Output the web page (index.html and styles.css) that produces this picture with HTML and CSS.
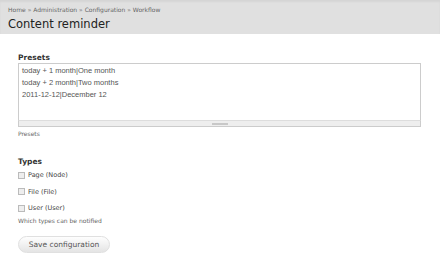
FILE: index.html
```html
<!DOCTYPE html>
<html lang="en">
<head>
    <meta charset="UTF-8">
    <title>Content reminder</title>
    <link rel="stylesheet" href="styles.css">
</head>
<body>
    <div class="branding">
        <div class="breadcrumb">
            <a href="#">Home</a> » <a href="#">Administration</a> » <a href="#">Configuration</a> » <a href="#">Workflow</a>
        </div>
        <h1 class="page-title">Content reminder</h1>
    </div>

    <div class="page">
        <form class="settings-form">
            <div class="form-item">
                <label for="presets">Presets</label>
                <div class="resizable">
                    <textarea id="presets" rows="5" spellcheck="false">today + 1 month|One month
today + 2 month|Two months
2011-12-12|December 12</textarea>
                    <div class="grippie"><span></span></div>
                </div>
                <div class="description">Presets</div>
            </div>

            <div class="form-item types">
                <label>Types</label>
                <div class="checkboxes">
                    <div class="checkbox"><input type="checkbox" id="t-page"><label for="t-page">Page (Node)</label></div>
                    <div class="checkbox"><input type="checkbox" id="t-file"><label for="t-file">File (File)</label></div>
                    <div class="checkbox"><input type="checkbox" id="t-user"><label for="t-user">User (User)</label></div>
                </div>
                <div class="description">Which types can be notified</div>
            </div>

            <div class="actions">
                <button type="submit" class="form-submit">Save configuration</button>
            </div>
        </form>
    </div>
</body>
</html>
```

FILE: styles.css
```css
* {
    margin: 0;
    padding: 0;
    box-sizing: border-box;
}

body {
    background: #fff;
    color: #333;
    font-family: 'DejaVu Sans', Verdana, sans-serif;
    font-size: 7px;
}

.branding {
    background: #e0e0e0;
    height: 34px;
    padding: 5px 8px 0;
    box-shadow: inset 0 2px 2px rgba(0,0,0,0.05);
}

.breadcrumb {
    font-size: 6px;
    color: #666;
    line-height: 9px;
}

.breadcrumb a {
    color: #666;
    text-decoration: none;
}

.page-title {
    font-size: 11.5px;
    font-weight: normal;
    color: #222;
    margin-top: 3px;
    line-height: 15px;
}

.page {
    padding: 19px 19px 0 18px;
}

.form-item > label {
    display: block;
    font-weight: bold;
    font-size: 7.5px;
    color: #333;
    line-height: 9px;
    margin-bottom: 1px;
}

.resizable {
    width: 403px;
}

.resizable textarea {
    display: block;
    width: 100%;
    height: 57px;
    border: 1px solid #ccc;
    border-bottom: none;
    padding: 1px 3px;
    font-family: 'Liberation Sans', Arial, sans-serif;
    font-size: 7.5px;
    line-height: 12px;
    color: #555;
    resize: none;
}

.grippie {
    height: 7px;
    background: #eee;
    border: 1px solid #ccc;
    border-top: 1px solid #ddd;
    display: flex;
    justify-content: center;
    align-items: center;
}

.grippie span {
    width: 16px;
    height: 2px;
    background: #c8c8c8;
}

.description {
    font-size: 6px;
    color: #666;
    line-height: 9px;
    margin-top: 2px;
}

.types {
    margin-top: 19px;
}

.checkboxes {
    margin-top: 1px;
}

.checkbox {
    display: flex;
    align-items: center;
    height: 16.5px;
    font-size: 6.5px;
    color: #444;
}

.checkbox input {
    appearance: none;
    width: 7px;
    height: 7px;
    border: 1px solid #bbb;
    background: #eee;
    margin-right: 3px;
}

.types .description {
    margin-top: -1px;
}

.actions {
    margin-top: 11px;
}

.form-submit {
    font-family: 'DejaVu Sans', Verdana, sans-serif;
    font-size: 7.5px;
    color: #555;
    width: 92px;
    height: 17px;
    border: 1px solid #e0e0e0;
    border-radius: 9px;
    background: linear-gradient(#fefefe, #e4e4e4);
}
```
